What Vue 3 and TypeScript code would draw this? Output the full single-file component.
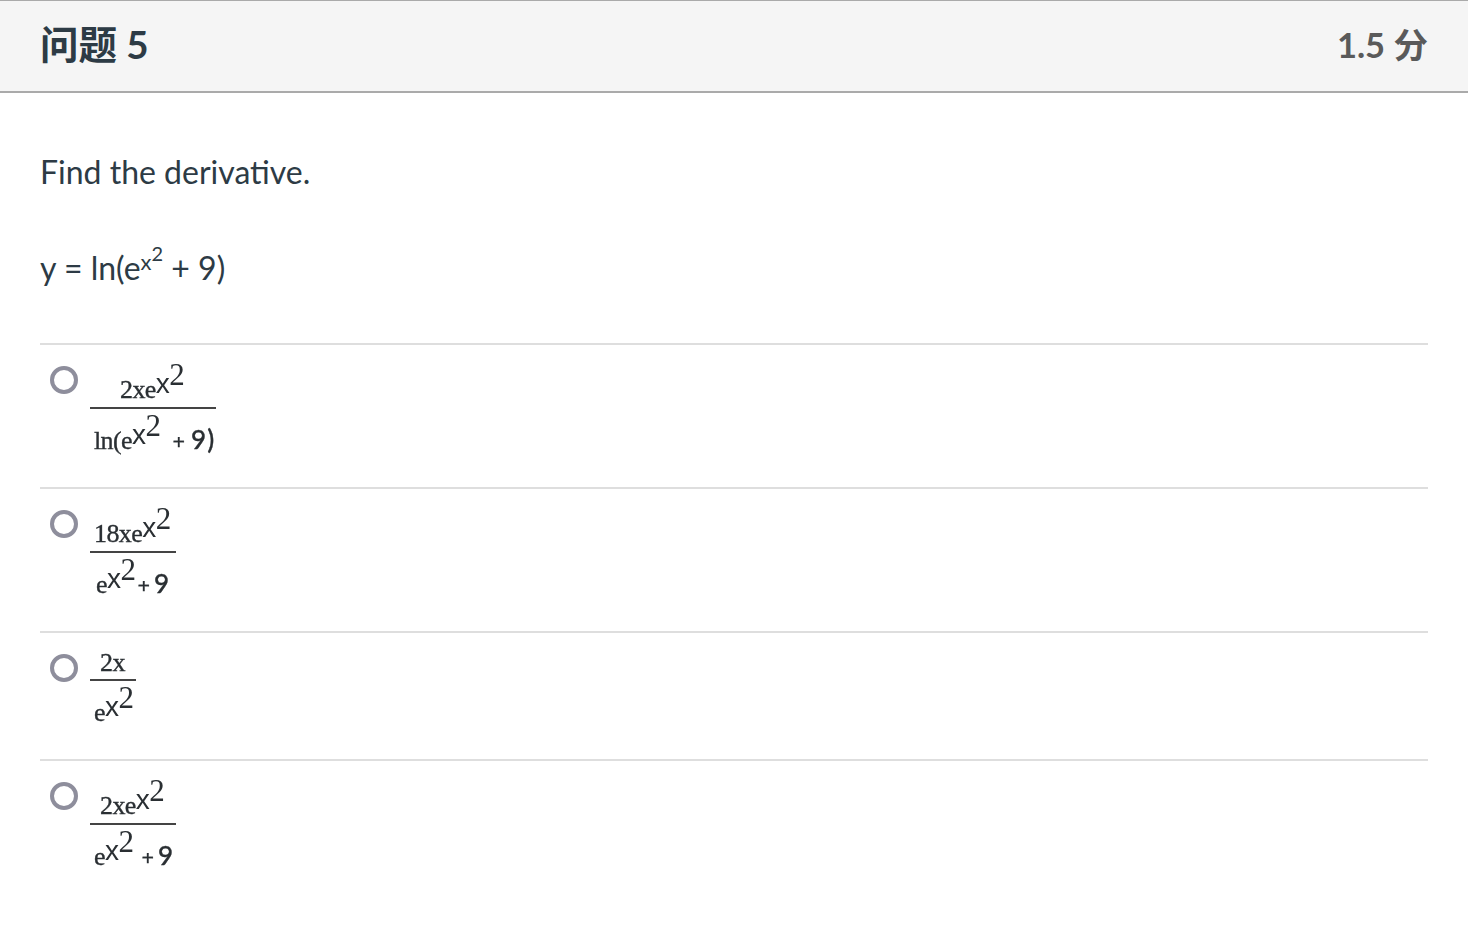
<script setup lang="ts">
interface Part { t: string; cls?: string }
interface Option { width: number; height: number; lift: number; indentTop: number; indentBottom: number; top: Part[]; bottom: Part[] }

const options: Option[] = [
  { width: 126, height: 144, lift: -1, indentTop: 30, indentBottom: 4,
    top: [{ t: '2xe' }, { t: 'x', cls: 'big up' }, { t: '2', cls: 'big up2' }],
    bottom: [{ t: 'ln(e' }, { t: 'x', cls: 'big up' }, { t: '2', cls: 'big up2' }, { t: '+', cls: 'plus gap-l' }, { t: '9)', cls: 'nine' }] },
  { width: 86, height: 144, lift: -1, indentTop: 4, indentBottom: 6,
    top: [{ t: '18xe' }, { t: 'x', cls: 'big up' }, { t: '2', cls: 'big up2' }],
    bottom: [{ t: 'e' }, { t: 'x', cls: 'big up' }, { t: '2', cls: 'big up2' }, { t: '+', cls: 'plus' }, { t: '9', cls: 'nine' }] },
  { width: 46, height: 128, lift: -17, indentTop: 10, indentBottom: 4,
    top: [{ t: '2x', cls: 'low' }],
    bottom: [{ t: 'e' }, { t: 'x', cls: 'big up' }, { t: '2', cls: 'big up2' }] },
  { width: 86, height: 128, lift: -1, indentTop: 10, indentBottom: 4,
    top: [{ t: '2xe' }, { t: 'x', cls: 'big up' }, { t: '2', cls: 'big up2' }],
    bottom: [{ t: 'e' }, { t: 'x', cls: 'big up' }, { t: '2', cls: 'big up2' }, { t: '+', cls: 'plus gap' }, { t: '9', cls: 'nine' }] },
]
</script>

<template>
  <div class="page">
    <header class="head">
      <h2 class="title">问题 5</h2>
      <div class="points">1.5 分</div>
    </header>
    <main class="body">
      <p class="prompt">Find the derivative.</p>
      <p class="equation">y = ln(e<sup class="sup">x<sup class="sup2">2</sup></sup> + 9)</p>
      <ul class="answers">
        <li v-for="(o, i) in options" :key="i" class="answer" :style="{ height: o.height + 'px' }">
          <span class="radio"></span>
          <div class="frac" :style="{ width: o.width + 'px', marginTop: o.lift + 'px' }">
            <div class="num" :style="{ paddingLeft: o.indentTop + 'px' }">
              <span v-for="(p, j) in o.top" :key="j" :class="p.cls">{{ p.t }}</span>
            </div>
            <div class="den" :style="{ paddingLeft: o.indentBottom + 'px' }">
              <span v-for="(p, j) in o.bottom" :key="j" :class="p.cls">{{ p.t }}</span>
            </div>
          </div>
        </li>
      </ul>
    </main>
  </div>
</template>

<style>
html, body { margin: 0; background: #fff; }
</style>

<style scoped>
.page { width: 1468px; height: 942px; font-family: Lato, "Noto Sans CJK SC", sans-serif; color: #2d3b45; overflow: hidden; background: #fff; }
.head { height: 90px; display: flex; justify-content: space-between; align-items: center; padding: 0 40px; background: #f5f5f5; border-top: 1px solid #aaa; border-bottom: 2px solid #aaa; }
.title { margin: -5px 0 0; font-size: 38.5px; font-weight: 700; line-height: 44px; color: #2d3b45; font-family: Lato, "Noto Sans CJK SC", sans-serif; }
.points { margin-top: -2px; font-size: 34.5px; font-weight: 700; line-height: 40px; color: #5a5a5a; }
.body { padding: 0 40px; }
.prompt { margin: 59px 0 0; font-size: 32px; line-height: 40px; }
.equation { margin: 56px 0 0; font-size: 32px; line-height: 40px; height: 95px; }
.sup { font-size: 22px; line-height: 0; vertical-align: 10px; }
.sup2 { font-size: 20px; line-height: 0; vertical-align: 9px; }
.answers { list-style: none; margin: 0; padding: 0; }
.answer { box-sizing: border-box; display: flex; align-items: flex-start; border-top: 2px solid #dedede; padding: 21px 0 0 10px; }
.radio { box-sizing: border-box; width: 28px; height: 28px; border: 4px solid #8e8e9c; border-radius: 50%; flex: none; }
.frac { margin-left: 12px; font-family: "Liberation Serif", serif; font-size: 26px; color: #2a2f33; -webkit-text-stroke: 0.35px #2a2f33; filter: blur(0.45px); }
.num, .den { white-space: nowrap; letter-spacing: -0.6px; }
.num { height: 42px; line-height: 46px; border-bottom: 2px solid #444; }
.den { line-height: 60px; height: 50px; }
.big { font-size: 31px; letter-spacing: -0.5px; position: relative; }
.up { top: -5px; font-family: "Liberation Sans", sans-serif; font-size: 28px; -webkit-text-stroke: 0; }
.up2 { top: -13px; -webkit-text-stroke: 0; }
.low { position: relative; top: 3px; }
.plus { margin-left: 2px; letter-spacing: 4px; font-weight: 700; font-size: 22px; }
.nine { font-family: Lato, sans-serif; letter-spacing: 1px; font-size: 26px; font-weight: 500; }
.gap { margin-left: 8px; }
.gap-l { margin-left: 12px; letter-spacing: 6px; }
</style>
